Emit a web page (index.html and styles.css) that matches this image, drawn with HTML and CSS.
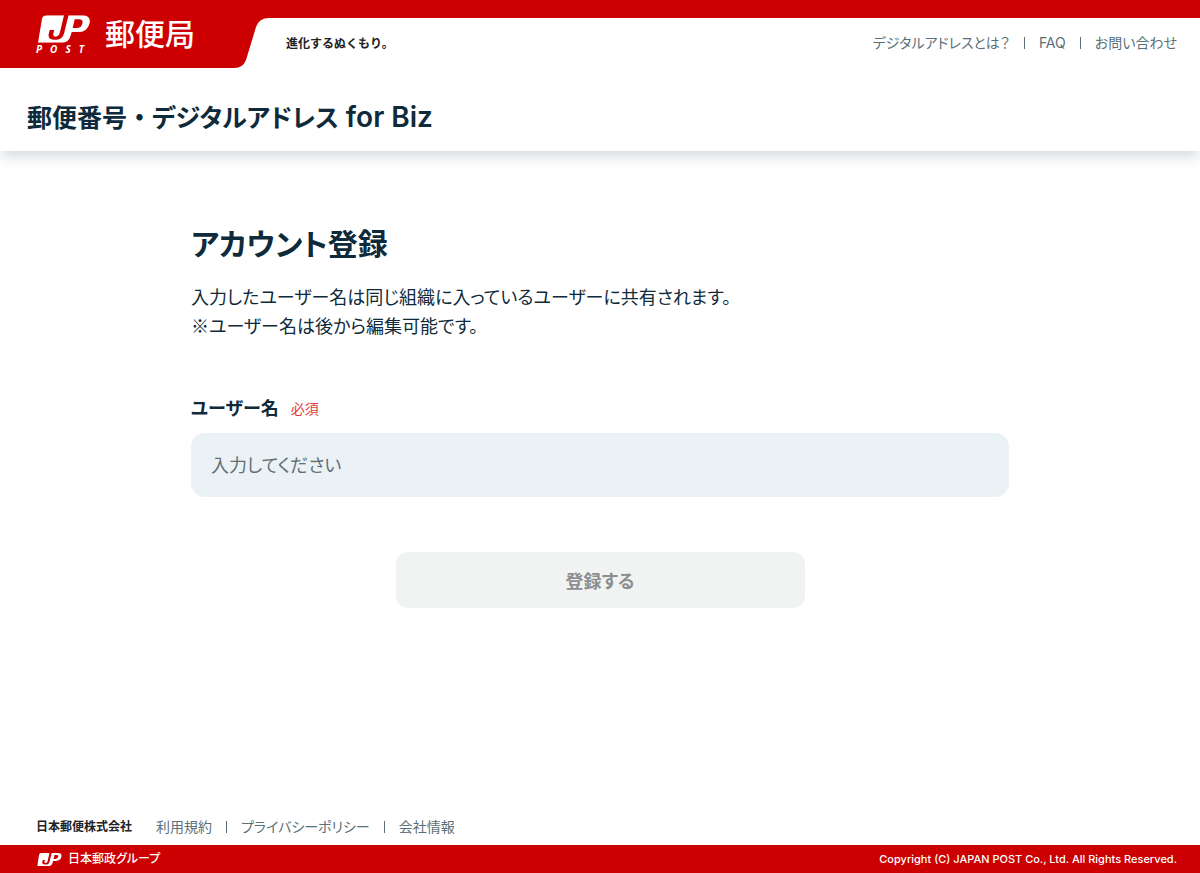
FILE: index.html
```html
<!DOCTYPE html>
<html lang="ja">
<head>
    <meta charset="UTF-8">
    <meta name="viewport" content="width=device-width, initial-scale=1.0">
    <title>アカウント登録 | 郵便番号・デジタルアドレス for Biz</title>
    <link rel="stylesheet" href="styles.css">
</head>
<body>
    <svg width="0" height="0" class="symbols" aria-hidden="true">
        <symbol id="jp-mark" viewBox="0 0 51 27">
            <path fill="#fff" fill-rule="evenodd" d="M7 0H25.5L21.5 17Q20.5 21 17 21Q14.500 21 15 18L16 14.500H11.500L10.500 18.500Q9.500 24 15.500 24H18Q24 24 25.500 18L30 0H43Q52.500 0 50.500 8Q48.500 16.500 39 16.500H33L32 20Q30 27 23 27H0L4 3Q5 0 9 0ZM36 4L34 12.500H38Q42.500 12.500 43.500 8Q44.500 4 40.500 4Z"/>
        </symbol>
    </svg>
    <header class="header">
        <div class="header-top">
            <a href="#" class="logo" aria-label="郵便局">
                <span class="logo-mark">
                    <svg width="52" height="28" viewBox="0 0 51 27"><use href="#jp-mark"/></svg>
                    <span class="logo-post">POST</span>
                </span>
                <span class="logo-name">郵便局</span>
                <svg class="logo-edge" width="40" height="68" viewBox="0 0 40 68">
                    <path fill="#cc0000" d="M0 0H40V18Q30 18 27 27L17 60Q14 68 5 68H0Z"/>
                </svg>
            </a>
            <p class="slogan">進化するぬくもり。</p>
            <nav>
                <ul class="links">
                    <li><a href="#">デジタルアドレスとは？</a></li>
                    <li><a href="#">FAQ</a></li>
                    <li><a href="#">お問い合わせ</a></li>
                </ul>
            </nav>
        </div>
        <p class="service-name">郵便番号<span class="dot">・</span>デジタルアドレス<span class="latin"> for Biz</span></p>
    </header>

    <main class="content">
        <h1>アカウント登録</h1>
        <p class="lead">入力したユーザー名は同じ組織に入っているユーザーに共有されます。<br>※ユーザー名は後から編集可能です。</p>
        <form class="form">
            <label for="username" class="label">ユーザー名<span class="required">必須</span></label>
            <input type="text" id="username" name="username" class="text-input" placeholder="入力してください">
            <button type="submit" class="submit-button" disabled>登録する</button>
        </form>
    </main>

    <footer>
        <div class="footer-links">
            <span class="company">日本郵便株式会社</span>
            <ul class="links">
                <li><a href="#">利用規約</a></li>
                <li><a href="#">プライバシーポリシー</a></li>
                <li><a href="#">会社情報</a></li>
            </ul>
        </div>
        <div class="footer-bar">
            <a href="#" class="group">
                <svg width="25" height="13" viewBox="0 0 51 27"><use href="#jp-mark"/></svg>
                日本郵政グループ
            </a>
            <small>Copyright (C) JAPAN POST Co., Ltd. All Rights Reserved.</small>
        </div>
    </footer>
</body>
</html>
```
FILE: styles.css
```css
* {
    box-sizing: border-box;
}

body {
    margin: 0;
    min-height: 100vh;
    display: flex;
    flex-direction: column;
    font-family: Inter, "Noto Sans CJK JP", sans-serif;
    font-feature-settings: "palt";
    color: #0f2a3a;
    background-color: #fff;
}

h1, p, ul {
    margin: 0;
    padding: 0;
}

a {
    text-decoration: none;
}

.symbols {
    position: absolute;
}

/* header */
.header {
    box-shadow: 0 8px 12px -2px #d8dbdf;
}

.header-top {
    display: flex;
    align-items: center;
    height: 68px;
    padding-right: 23px;
    border-top: 18px solid #cc0000;
}

.logo {
    display: flex;
    align-items: center;
    height: 68px;
    margin-top: -18px;
    padding-left: 36px;
    background-color: #cc0000;
    position: relative;
    width: 229px;
    color: #fff;
}

.logo-mark {
    display: flex;
    flex-direction: column;
    width: 69px;
    padding-top: 2px;
}

.logo-mark svg {
    margin-left: 2px;
}

.logo-post {
    font: italic bold 10px/12px "Open Sans", sans-serif;
    letter-spacing: 8px;
}

.logo-name {
    font-size: 30px;
    font-weight: 500;
    line-height: 40px;
}

.logo-edge {
    position: absolute;
    top: 0;
    left: 100%;
}

.slogan {
    margin-left: 57px;
    padding-top: 2px;
    font-size: 12px;
    font-weight: bold;
    line-height: 20px;
    font-feature-settings: normal;
    color: #222;
}

nav {
    margin-left: auto;
}

.links {
    display: flex;
    align-items: center;
    list-style: none;
    font-size: 14px;
    line-height: 20px;
}

.links li {
    display: flex;
    align-items: center;
}

.links li + li::before {
    content: "";
    width: 1px;
    height: 12px;
    margin: 0 14px;
    background-color: #5a7079;
}

.links a {
    color: #5a7079;
}

.service-name {
    padding: 31px 27px 15px;
    font-size: 25px;
    font-weight: bold;
    line-height: 36px;
}

.service-name .dot {
    font-feature-settings: normal;
}

.service-name .latin {
    font-size: 28px;
    font-weight: 600;
}

/* content */
.content {
    flex: 1;
    width: 100%;
    max-width: 858px;
    margin: 0 auto;
    padding: 70px 20px 40px;
}

h1 {
    font-size: 30px;
    line-height: 46px;
}

.lead {
    margin-top: 15px;
    font-family: "Noto Sans CJK JP", sans-serif;
    font-size: 18px;
    line-height: 29px;
}

.form {
    display: flex;
    flex-direction: column;
    margin-top: 56px;
}

.label {
    display: flex;
    align-items: center;
    gap: 12px;
    font-size: 18px;
    font-weight: bold;
    line-height: 26px;
}

.required {
    font-size: 14px;
    font-weight: normal;
    color: #e03c3c;
}

.text-input {
    height: 64px;
    margin-top: 11px;
    padding: 0 20px;
    border: none;
    border-radius: 14px;
    background-color: #eaf2f5;
    font: inherit;
    font-size: 18px;
    font-feature-settings: "palt";
    color: inherit;
}

.text-input::placeholder {
    color: #5f6f75;
}

.submit-button {
    align-self: center;
    width: 50%;
    height: 56px;
    margin-top: 55px;
    border: none;
    border-radius: 12px;
    background-color: #f1f3f3;
    font: inherit;
    font-size: 18px;
    font-weight: bold;
    font-feature-settings: "palt";
    color: #8b8f8f;
}

/* footer */
.footer-links {
    display: flex;
    align-items: center;
    gap: 24px;
    padding: 0 36px 8px;
}

.company {
    font-size: 12px;
    font-weight: bold;
    line-height: 20px;
    color: #222;
}

.footer-bar {
    display: flex;
    align-items: center;
    justify-content: space-between;
    height: 28px;
    padding: 0 23px 0 37px;
    background-color: #cc0000;
    color: #fff;
}

.group {
    display: flex;
    align-items: center;
    gap: 6px;
    font-size: 12px;
    font-weight: 500;
    line-height: 20px;
    color: #fff;
}

small {
    font-size: 11px;
    font-weight: 500;
}
```
